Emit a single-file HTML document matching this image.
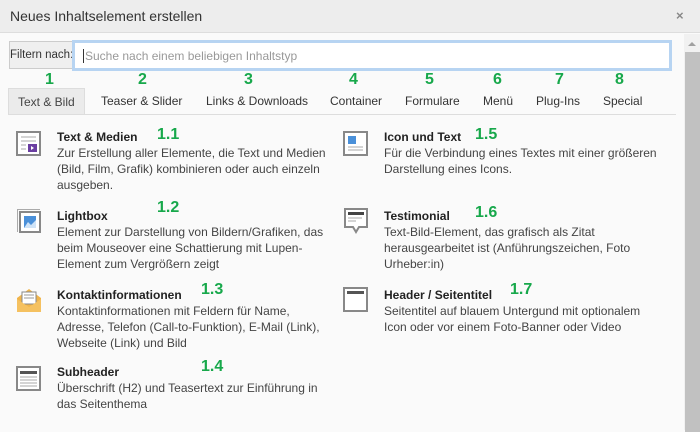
<!DOCTYPE html>
<html><head><meta charset="utf-8"><style>
*{margin:0;padding:0;box-sizing:border-box}
body{width:700px;height:430px;overflow:hidden;background:#fafafa;font-family:"Liberation Sans","DejaVu Sans",sans-serif;color:#333;position:relative}
.hdr{position:absolute;left:0;top:0;width:700px;height:33px;background:#ededed;border-bottom:1px solid #ddd}
.hdr .t{position:absolute;left:10px;top:8px;font-size:14px;color:#333}
.hdr .x{position:absolute;left:676px;top:8px;font-size:13px;color:#888;font-weight:bold}
.sb{position:absolute;left:684px;top:34px;width:16px;height:396px;background:#f1f1f1}
.sb .th{position:absolute;left:1px;top:18px;width:15px;height:380px;background:#c1c1c1}
.sb .ar{position:absolute;left:4px;top:8px;width:0;height:0;border-left:4px solid transparent;border-right:4px solid transparent;border-bottom:4px solid #a0a0a0}
.lab{position:absolute;left:9px;top:41px;width:65px;height:28px;background:#efefef;border:1px solid #ccc;font-size:11.5px;line-height:26px;text-align:center;color:#333;white-space:nowrap;overflow:hidden}
.inp{position:absolute;left:72px;top:40px;width:600px;height:31px;border:3px solid #b7d4f2;background:#fff}
.inp span{position:absolute;left:8px;top:6px;font-size:12px;color:#999;border-left:1px solid #333;padding-left:1px}
.n{position:absolute;top:71px;font-size:16px;font-weight:bold;color:#17a84b}
.tab{position:absolute;top:88px;height:27px;font-size:12px;line-height:27px;color:#333;white-space:nowrap}
.tab.a{background:#ebebeb;border:1px solid #ddd;border-bottom:none;padding:0 9px;color:#444}
.line{position:absolute;left:8px;top:114px;width:668px;height:1px;background:#ddd}
.it{position:absolute;font-size:12px;line-height:16px;color:#444}
.it b{color:#222;display:block}
.num{position:absolute;font-size:16px;font-weight:bold;color:#17a84b}
svg{position:absolute}
</style></head><body>
<div class="hdr"><div class="t">Neues Inhaltselement erstellen</div><div class="x">×</div></div>
<div class="sb"><div class="ar"></div><div class="th"></div></div>
<div class="lab">Filtern nach:</div>
<div class="inp"><span>Suche nach einem beliebigen Inhaltstyp</span></div>
<div class="n" style="left:45px">1</div><div class="n" style="left:138px">2</div><div class="n" style="left:244px">3</div><div class="n" style="left:349px">4</div><div class="n" style="left:425px">5</div><div class="n" style="left:493px">6</div><div class="n" style="left:555px">7</div><div class="n" style="left:615px">8</div>
<div class="tab a" style="left:8px">Text &amp; Bild</div>
<div class="tab" style="left:101px">Teaser &amp; Slider</div>
<div class="tab" style="left:206px">Links &amp; Downloads</div>
<div class="tab" style="left:330px">Container</div>
<div class="tab" style="left:405px">Formulare</div>
<div class="tab" style="left:483px">Menü</div>
<div class="tab" style="left:536px">Plug-Ins</div>
<div class="tab" style="left:603px">Special</div>
<div class="line"></div>

<svg style="left:16px;top:131px" width="25" height="25"><rect x="1" y="1" width="23" height="23" fill="#fff" stroke="#888" stroke-width="2"/><g stroke="#aaa"><line x1="5" y1="6" x2="20" y2="6"/><line x1="5" y1="10" x2="20" y2="10"/><line x1="5" y1="14" x2="10" y2="14"/><line x1="5" y1="18" x2="10" y2="18"/></g><rect x="12" y="13" width="9" height="8" fill="#6a3ea1"/><path d="M15 15 L18 17 L15 19Z" fill="#fff"/></svg>
<div class="it" style="left:57px;top:129px;width:275px"><b>Text &amp; Medien</b>Zur Erstellung aller Elemente, die Text und Medien (Bild, Film, Grafik) kombinieren oder auch einzeln ausgeben.</div>
<div class="num" style="left:157px;top:126px">1.1</div>

<svg style="left:16px;top:208px" width="25" height="25"><g fill="#aaa"><rect x="1" y="1" width="23" height="1"/><rect x="1" y="1" width="1" height="23"/></g><rect x="4" y="4" width="20" height="20" fill="#fff" stroke="#888" stroke-width="2"/><rect x="8" y="8" width="12" height="12" fill="#4a90d9"/><path d="M8 20 L12 14 L15 17 L20 12 L20 20Z" fill="#cfe3f7"/></svg>
<div class="it" style="left:57px;top:208px;width:275px"><b>Lightbox</b>Element zur Darstellung von Bildern/Grafiken, das beim Mouseover eine Schattierung mit Lupen-Element zum Vergrößern zeigt</div>
<div class="num" style="left:157px;top:199px">1.2</div>

<svg style="left:16px;top:287px" width="26" height="26"><path d="M1 11 L13 2 L25 11 L25 25 L1 25Z" fill="#f0b44a"/><rect x="6" y="5" width="14" height="12" fill="#fff" stroke="#888"/><g stroke="#999"><line x1="8" y1="8" x2="18" y2="8"/><line x1="8" y1="11" x2="18" y2="11"/></g><path d="M1 12 L13 20 L25 12 L25 25 L1 25Z" fill="#f5c160"/></svg>
<div class="it" style="left:57px;top:287px;width:275px"><b>Kontaktinformationen</b>Kontaktinformationen mit Feldern für Name, Adresse, Telefon (Call-to-Funktion), E-Mail (Link), Webseite (Link) und Bild</div>
<div class="num" style="left:201px;top:281px">1.3</div>

<svg style="left:16px;top:366px" width="25" height="25"><rect x="1" y="1" width="23" height="23" fill="#fff" stroke="#888" stroke-width="2"/><rect x="4" y="5" width="17" height="3" fill="#555"/><g stroke="#aaa"><line x1="4" y1="11" x2="21" y2="11"/><line x1="4" y1="14" x2="21" y2="14"/><line x1="4" y1="17" x2="21" y2="17"/><line x1="4" y1="20" x2="21" y2="20"/></g></svg>
<div class="it" style="left:57px;top:364px;width:275px"><b>Subheader</b>Überschrift (H2) und Teasertext zur Einführung in das Seitenthema</div>
<div class="num" style="left:201px;top:358px">1.4</div>

<svg style="left:343px;top:131px" width="25" height="25"><rect x="1" y="1" width="23" height="23" fill="#fff" stroke="#888" stroke-width="2"/><rect x="5" y="5" width="8" height="8" fill="#4a90d9"/><g stroke="#aaa"><line x1="5" y1="16" x2="20" y2="16"/><line x1="5" y1="19" x2="20" y2="19"/></g></svg>
<div class="it" style="left:384px;top:129px;width:285px"><b>Icon und Text</b>Für die Verbindung eines Textes mit einer größeren Darstellung eines Icons.</div>
<div class="num" style="left:475px;top:126px">1.5</div>

<svg style="left:344px;top:208px" width="24" height="26"><path d="M1 1 H23 V19 H15 L12 24 L9 19 H1Z" fill="#fff" stroke="#888" stroke-width="2"/><rect x="4" y="4" width="16" height="3" fill="#444"/><g stroke="#aaa"><line x1="4" y1="10" x2="18" y2="10"/><line x1="4" y1="13" x2="12" y2="13"/></g></svg>
<div class="it" style="left:384px;top:208px;width:270px"><b>Testimonial</b>Text-Bild-Element, das grafisch als Zitat herausgearbeitet ist (Anführungszeichen, Foto Urheber:in)</div>
<div class="num" style="left:475px;top:204px">1.6</div>

<svg style="left:343px;top:287px" width="25" height="25"><rect x="1" y="1" width="23" height="23" fill="#fff" stroke="#888" stroke-width="2"/><rect x="4" y="4" width="17" height="3" fill="#555"/></svg>
<div class="it" style="left:384px;top:287px;width:265px"><b>Header / Seitentitel</b>Seitentitel auf blauem Untergund mit optionalem Icon oder vor einem Foto-Banner oder Video</div>
<div class="num" style="left:510px;top:281px">1.7</div>
</body></html>
